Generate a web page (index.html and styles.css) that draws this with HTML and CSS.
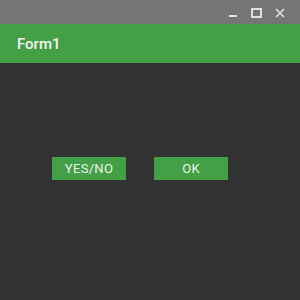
FILE: index.html
```html
<!DOCTYPE html>
<html lang="en">
<head>
    <meta charset="UTF-8">
    <title>Form1</title>
    <link rel="stylesheet" href="styles.css">
</head>
<body>
    <div class="window">
        <div class="titlebar">
            <svg class="win-icon" viewBox="0 0 10 10" width="10" height="10">
                <rect x="1" y="7" width="8" height="2" fill="#e0e0e0"/>
            </svg>
            <svg class="win-icon" viewBox="0 0 11 10" width="11" height="10">
                <rect x="1" y="1" width="9" height="8" fill="none" stroke="#e0e0e0" stroke-width="2"/>
            </svg>
            <svg class="win-icon" viewBox="0 0 10 10" width="10" height="10">
                <path d="M1 1 L9 9 M9 1 L1 9" stroke="#e0e0e0" stroke-width="1.6"/>
            </svg>
        </div>
        <header class="header">
            <h1>Form1</h1>
        </header>
        <main class="content">
            <div class="buttons">
                <button>YES/NO</button>
                <button>OK</button>
            </div>
        </main>
    </div>
</body>
</html>
```

FILE: styles.css
```css
* {
    margin: 0;
    padding: 0;
    box-sizing: border-box;
}

body {
    font-family: Roboto, 'Noto Sans', sans-serif;
    background: #333333;
    width: 300px;
    height: 300px;
    overflow: hidden;
}

.window {
    display: flex;
    flex-direction: column;
    height: 300px;
}

.titlebar {
    height: 24px;
    background: #757575;
    display: flex;
    justify-content: flex-end;
    align-items: center;
    padding-right: 15px;
    gap: 13px;
}

.win-icon {
    display: block;
    margin-top: 1px;
}

.header {
    height: 39px;
    background: #43a047;
    display: flex;
    align-items: center;
    padding-left: 17px;
}

.header h1 {
    font-size: 15px;
    font-weight: 500;
    color: #f4f4f4;
}

.content {
    flex: 1;
    background: #333333;
}

.buttons {
    display: flex;
    gap: 28px;
    padding-left: 52px;
    margin-top: 94px;
}

button {
    width: 74px;
    height: 23px;
    background: #43a047;
    color: #eaf5ea;
    border: none;
    border-radius: 0;
    font-family: Roboto, sans-serif;
    font-size: 13px;
    font-weight: 400;
    letter-spacing: 0.3px;
}
```
